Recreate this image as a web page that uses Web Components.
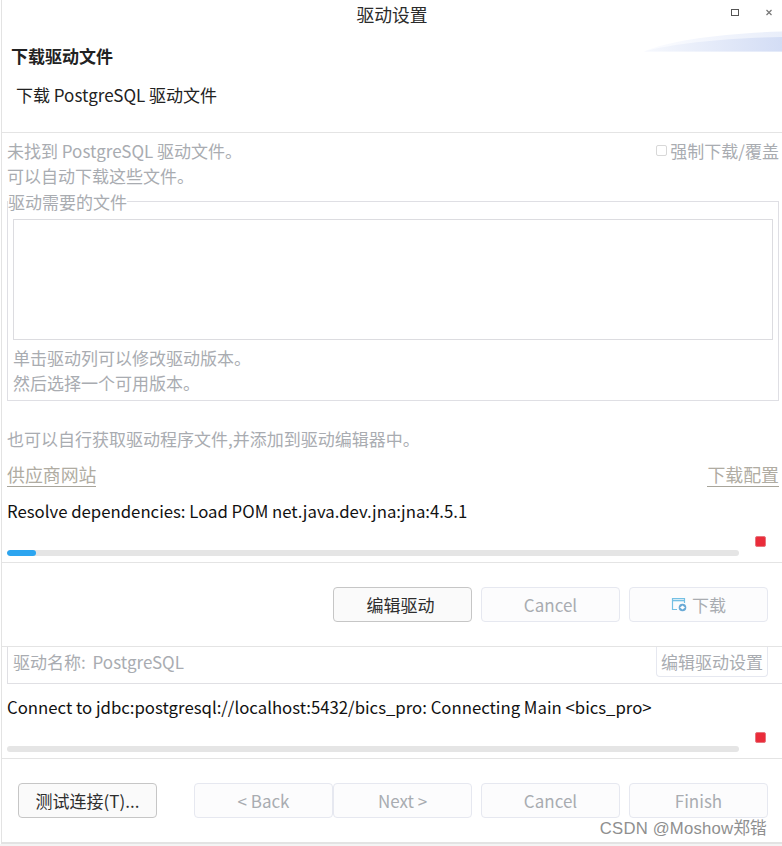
<!DOCTYPE html>
<html lang="zh">
<head>
<meta charset="utf-8">
<title>驱动设置</title>
<style>
  html, body { margin: 0; padding: 0; background: #fff; }
  body { font: 17px/25px "Noto Sans CJK SC", "Noto Sans", sans-serif; color: #1c1c1c; }
</style>
</head>
<body>
<wizard-window>
  <title-bar>驱动设置</title-bar>
  <wizard-header heading="下载驱动文件">下载 PostgreSQL 驱动文件</wizard-header>
  <download-page></download-page>
  <progress-row percent="4">Resolve dependencies: Load POM net.java.dev.jna:jna:4.5.1</progress-row>
  <button-bar line>
    <ui-button active>编辑驱动</ui-button>
    <ui-button disabled>Cancel</ui-button>
    <ui-button disabled icon>下载</ui-button>
  </button-bar>
  <driver-name></driver-name>
  <progress-row percent="0" top="11">Connect to jdbc:postgresql://localhost:5432/bics_pro: Connecting Main &lt;bics_pro&gt;</progress-row>
  <button-bar>
    <ui-button slot="lead">测试连接(T)...</ui-button>
    <ui-button disabled joined>&lt; Back</ui-button>
    <ui-button disabled>Next &gt;</ui-button>
    <ui-button disabled>Cancel</ui-button>
    <ui-button disabled>Finish</ui-button>
  </button-bar>
</wizard-window>

<script>
class WizardWindow extends HTMLElement {
  constructor() {
    super();
    this.attachShadow({ mode: 'open' });
    this.shadowRoot.innerHTML = `
      <style>
        :host { display: block; width: 782px; height: 846px; background: #fff; overflow: hidden; position: relative; }
        .frame { background: #fff; margin-left: 1px; border-left: 1px solid #e3e3e3; border-bottom: 2px solid #e3e3e3; height: 844px; box-sizing: border-box; }
        .strip { height: 2px; background: #f4f4f4; }
        .mark {
          position: absolute; right: 15px; top: 817px;
          font: 16.7px/24px "Liberation Sans", "Noto Sans CJK SC", sans-serif;
          color: #8f8f8f; letter-spacing: 0.2px; white-space: nowrap;
        }
      </style>
      <div class="frame"><slot></slot></div>
      <div class="strip"></div>
      <div class="mark">CSDN @Moshow郑锴</div>
    `;
  }
}

class TitleBar extends HTMLElement {
  constructor() {
    super();
    this.attachShadow({ mode: 'open' });
    this.shadowRoot.innerHTML = `
      <style>
        :host { display: flex; height: 32px; align-items: center; justify-content: center; position: relative; }
        .t { font-size: 17.8px; line-height: 30px; color: #2b2b2b; margin-top: -4px; }
        .ctl { position: absolute; right: 0; top: 0; display: flex; }
        svg { display: block; }
      </style>
      <span class="t"><slot></slot></span>
      <div class="ctl">
        <svg width="62" height="26" viewBox="0 0 62 26">
          <rect x="11.5" y="9.5" width="7" height="6" fill="none" stroke="#555" stroke-width="1"/>
          <path d="M46.5 10L51.5 15M51.5 10L46.5 15" stroke="#777" stroke-width="1.2" fill="none"/>
        </svg>
      </div>
    `;
  }
}

class WizardHeader extends HTMLElement {
  constructor() {
    super();
    this.attachShadow({ mode: 'open' });
    this.shadowRoot.innerHTML = `
      <style>
        :host { display: block; height: 101px; box-sizing: border-box; border-bottom: 1px solid #e4e4e4; position: relative; padding: 11px 0 0 9px; }
        h2 { margin: 0; font-size: 17px; line-height: 26px; font-weight: 700; color: #222; }
        p { margin: 13px 0 0 5px; font-size: 17px; line-height: 26px; color: #222; }
        svg { position: absolute; right: 0; top: -1px; display: block; }
      </style>
      <h2></h2>
      <p><slot></slot></p>
      <svg width="138" height="21" viewBox="0 0 138 21">
        <defs>
          <linearGradient id="g" x1="0" x2="1" y1="0" y2="0">
            <stop offset="0" stop-color="#f6f8fd"/>
            <stop offset="1" stop-color="#d3ddf5"/>
          </linearGradient>
          <linearGradient id="h" x1="0" x2="1" y1="0" y2="0">
            <stop offset="0" stop-color="#fbfcff"/>
            <stop offset="1" stop-color="#e9eefa"/>
          </linearGradient>
        </defs>
        <path d="M0 20.5C22 10 80 2 138 0.5V20.5Z" fill="url(#h)"/>
        <path d="M0 20.5C30 12 85 7 138 6V20.5Z" fill="url(#g)"/>
      </svg>
    `;
    this.shadowRoot.querySelector('h2').textContent = this.getAttribute('heading');
  }
}

class DownloadPage extends HTMLElement {
  constructor() {
    super();
    this.attachShadow({ mode: 'open' });
    this.shadowRoot.innerHTML = `
      <style>
        :host { display: block; height: 366px; box-sizing: border-box; padding: 5px 3px 0 5px; color: #a9acb1; font-size: 17px; line-height: 25px; }
        .top { display: flex; justify-content: space-between; }
        .force { display: flex; align-items: center; gap: 3px; }
        .box { width: 9px; height: 9px; border: 1px solid #d8d8d8; border-radius: 2px; background: #fff; }
        fieldset { margin: 1px 0 0; padding: 5px 5px 0 5px; border: 1px solid #dfdfe4; height: 212px; box-sizing: border-box; }
        legend { padding: 0; margin-left: -5px; line-height: 25px; }
        .table { height: 121px; box-sizing: border-box; border: 1px solid #dcdce0; margin: 0 0 5px; background: #fff; }
        .also { margin-top: 25px; }
        .links { display: flex; justify-content: space-between; margin-top: 13px; color: #b0aca2; font-size: 17.9px; }
        .links span { border-bottom: 1px solid #a8a59b; line-height: 21px; height: 22px; }
      </style>
      <div class="top"><span>未找到 PostgreSQL 驱动文件。</span><span class="force"><i class="box"></i>强制下载/覆盖</span></div>
      <div>可以自动下载这些文件。</div>
      <fieldset>
        <legend>驱动需要的文件</legend>
        <div class="table"></div>
        <div>单击驱动列可以修改驱动版本。</div>
        <div>然后选择一个可用版本。</div>
      </fieldset>
      <div class="also">也可以自行获取驱动程序文件,并添加到驱动编辑器中。</div>
      <div class="links"><span>供应商网站</span><span>下载配置</span></div>
    `;
  }
}

class ProgressRow extends HTMLElement {
  constructor() {
    super();
    this.attachShadow({ mode: 'open' });
    this.shadowRoot.innerHTML = `
      <style>
        :host { display: block; box-sizing: border-box; padding: 0 16px 6px 5px; border-bottom: 1px solid #e4e4e4; font-size: 16.75px; line-height: 25px; color: #111; }
        .msg { white-space: nowrap; height: 25px; }
        .bottom { display: flex; align-items: flex-end; justify-content: space-between; margin-top: 12px; }
        .bar { width: 732px; height: 6px; border-radius: 3px; background: #e5e5e5; overflow: hidden; }
        .fill { height: 100%; background: #2ca5f0; border-radius: 3px; }
        .stop { width: 11px; height: 11px; box-sizing: border-box; border: 1px solid #e8767e; background: #ea2c3a; border-radius: 2px; margin-bottom: 9px; }
      </style>
      <div class="msg"><slot></slot></div>
      <div class="bottom"><div class="bar"><div class="fill"></div></div><div class="stop"></div></div>
    `;
    this.shadowRoot.querySelector('.fill').style.width = (this.getAttribute('percent') || 0) + '%';
    this.style.paddingTop = (this.getAttribute('top') || 0) + 'px';
  }
}

class ButtonBar extends HTMLElement {
  constructor() {
    super();
    this.attachShadow({ mode: 'open' });
    this.shadowRoot.innerHTML = `
      <style>
        :host { display: flex; box-sizing: border-box; padding: 24px 14px 0 16px; height: 83px; align-items: flex-start; }
        :host([line]) { height: 84px; border-bottom: 1px solid #e4e4e4; }
        .lead { flex: 0 0 auto; }
        .rest { margin-left: auto; display: flex; gap: 9px; }
      </style>
      <div class="lead"><slot name="lead"></slot></div>
      <div class="rest"><slot></slot></div>
    `;
  }
}

class UiButton extends HTMLElement {
  constructor() {
    super();
    this.attachShadow({ mode: 'open' });
    this.shadowRoot.innerHTML = `
      <style>
        :host { display: flex; width: 139px; height: 35px; box-sizing: border-box; align-items: center; justify-content: center; gap: 5px; border: 1px solid #c6c6c6; border-radius: 4px; background: #fafafa; color: #2e2e2e; font-size: 17px; line-height: 25px; white-space: nowrap; }
        :host([disabled]) { border-color: #e6e8f0; background: #fcfcfd; color: #a9acb1; }
        :host([active]) { padding-right: 4px; }
        :host([joined]) { margin-right: -9px; }
        svg { display: none; }
        :host([icon]) svg { display: block; }
      </style>
      <svg width="16" height="15" viewBox="0 0 16 15">
        <path d="M6 12.5H1.5V1.5H13.5V6" fill="none" stroke="#74c0e4" stroke-width="1.2"/>
        <path d="M1.5 3.5H13.5" stroke="#74c0e4" stroke-width="1.6"/>
        <circle cx="11.5" cy="10.5" r="3.8" fill="#6aaad6"/>
        <path d="M9 10.5L11.5 8.5L14 10.5L11.5 12.5Z" fill="#fff"/>
      </svg>
      <slot></slot>
    `;
  }
}

class DriverName extends HTMLElement {
  constructor() {
    super();
    this.attachShadow({ mode: 'open' });
    this.shadowRoot.innerHTML = `
      <style>
        :host { display: block; height: 37px; box-sizing: border-box; padding-left: 5px; color: #a9acb1; font-size: 17px; line-height: 25px; }
        .row { height: 37px; box-sizing: border-box; display: flex; justify-content: space-between; align-items: flex-start; border-left: 1px solid #e0e0e4; border-bottom: 1px solid #e0e0e4; padding: 2px 14px 0 5px; }
        .edit { height: 30px; margin-top: -2px; width: 112px; box-sizing: border-box; text-align: center; border: 1px solid #e6e8f0; border-top: 0; border-radius: 0 0 4px 4px; line-height: 29px; white-space: nowrap; }
        .lbl { word-spacing: 3px; }
      </style>
      <div class="row"><span class="lbl">驱动名称: PostgreSQL</span><span class="edit">编辑驱动设置</span></div>
    `;
  }
}

customElements.define('wizard-window', WizardWindow);
customElements.define('title-bar', TitleBar);
customElements.define('wizard-header', WizardHeader);
customElements.define('download-page', DownloadPage);
customElements.define('progress-row', ProgressRow);
customElements.define('button-bar', ButtonBar);
customElements.define('ui-button', UiButton);
customElements.define('driver-name', DriverName);
</script>
</body>
</html>
